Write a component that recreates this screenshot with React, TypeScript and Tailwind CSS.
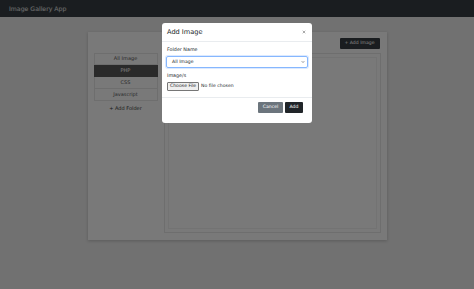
import { ChevronDown, X } from 'lucide-react';

const folders = ['All Image', 'PHP', 'CSS', 'Javascript'];

function Sidebar() {
  return (
    <div className="w-[64px] shrink-0">
      <ul className="flex flex-col">
        {folders.map((name) => (
          <li
            key={name}
            className={
              name === 'PHP'
                ? 'flex h-[12px] items-center justify-center border border-[#555] bg-[#555] text-[5px] text-white'
                : 'flex h-[12px] items-center justify-center border border-[#dcdcdc] border-t-0 first:border-t text-[5px] text-[#555]'
            }
          >
            {name}
          </li>
        ))}
      </ul>
      <div className="mt-[4px] flex h-[8px] items-center justify-center text-[5px] text-[#333]">
        + Add Folder
      </div>
    </div>
  );
}

function AddImageModal() {
  return (
    <div className="fixed inset-0 bg-black/50">
      <div className="mx-auto mt-[23px] w-[150px] rounded-[3px] bg-white text-[#212529]">
        <div className="flex h-[19px] items-center justify-between border-b border-[#e9ecef] pl-[5px] pr-[6px]">
          <h5 className="text-[6.6px] leading-none">Add Image</h5>
          <X className="h-[4px] w-[4px] text-[#555]" strokeWidth={3} />
        </div>

        <div className="px-[4px] pt-[5px] pb-[6px]">
          <label className="block h-[6px] pl-[1px] text-[4.8px] leading-[6px]">
            Folder Name
          </label>
          <div className="mt-[3px] flex h-[12px] items-center justify-between rounded-[2px] border border-[#86b7fe] pl-[5px] pr-[2px] shadow-[0_0_0_1px_rgba(13,110,253,0.15)]">
            <span className="text-[4.6px]">All Image</span>
            <ChevronDown className="h-[4px] w-[4px]" strokeWidth={3} />
          </div>
          <label className="mt-[5px] block h-[6px] pl-[1px] text-[4.8px] leading-[6px]">
            Image/s
          </label>
          <div className="mt-[3px] flex h-[9px] items-center gap-[2px] pl-[1px]">
            <span className="flex h-[9px] items-center rounded-[1px] border border-[#767676] bg-[#efefef] px-[2px] text-[4.6px]">
              Choose File
            </span>
            <span className="text-[4.6px]">No file chosen</span>
          </div>
        </div>

        <div className="flex justify-end gap-[2px] border-t border-[#e9ecef] pt-[4px] pb-[10px] pr-[9px]">
          <button className="h-[11px] w-[25px] rounded-[1px] bg-[#6c757d] text-[4.6px] text-white">
            Cancel
          </button>
          <button className="h-[11px] w-[18px] rounded-[1px] bg-[#212529] text-[4.6px] text-white">
            Add
          </button>
        </div>
      </div>
    </div>
  );
}

export default function App() {
  return (
    <div
      className="relative min-h-[289px] bg-[#e2e2e2]"
      style={{ fontFamily: '"DejaVu Sans", sans-serif' }}
    >
      <nav className="flex h-[17px] items-center bg-[#343a40] px-[9px]">
        <span className="text-[6.2px] text-white/85">Image Gallery App</span>
      </nav>

      <div className="mx-auto mt-[15px] flex h-[208px] w-[299px] flex-col bg-[#f3f3f3] px-[6px] pt-[6px] pb-[7px] shadow-[0_1px_3px_rgba(0,0,0,0.2)]">
        <div className="flex justify-end pr-[1px]">
          <button className="h-[11px] w-[40px] rounded-[1px] bg-[#343a40] text-[4.6px] text-white">
            + Add Image
          </button>
        </div>
        <div className="mt-[4px] flex flex-1 gap-[6px]">
          <Sidebar />
          <div className="flex-1 border border-[#dcdcdc] p-[3px]">
            <div className="h-full border border-[#e6e6e6]" />
          </div>
        </div>
      </div>

      <AddImageModal />
    </div>
  );
}
